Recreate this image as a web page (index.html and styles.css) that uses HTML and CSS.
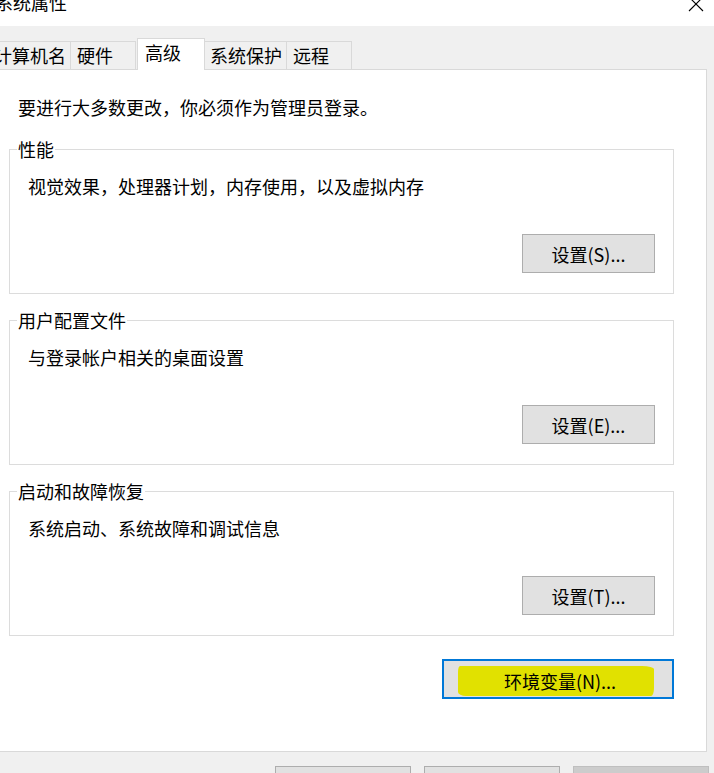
FILE: index.html
```html
<!DOCTYPE html>
<html lang="zh-CN">
<head>
  <meta charset="UTF-8" />
  <title>系统属性</title>
  <link rel="stylesheet" href="styles.css">
</head>
<body>

  <div class="dialog">
    <div class="titlebar">
      <div class="title">系统属性</div>
      <svg class="close" width="16" height="16" viewBox="0 0 16 16">
        <path d="M1 1 L15 15 M15 1 L1 15" stroke="#000" stroke-width="1.1" fill="none" />
      </svg>
    </div>

    <div class="tabs">
      <div class="tab first">计算机名</div>
      <div class="tab">硬件</div>
      <div class="tab active">高级</div>
      <div class="tab">系统保护</div>
      <div class="tab">远程</div>
    </div>

    <div class="panel">
      <p class="notice">要进行大多数更改，你必须作为管理员登录。</p>

      <fieldset class="group">
        <legend>性能</legend>
        <p class="desc">视觉效果，处理器计划，内存使用，以及虚拟内存</p>
        <button class="btn">设置(S)...</button>
      </fieldset>

      <fieldset class="group">
        <legend>用户配置文件</legend>
        <p class="desc">与登录帐户相关的桌面设置</p>
        <button class="btn">设置(E)...</button>
      </fieldset>

      <fieldset class="group">
        <legend>启动和故障恢复</legend>
        <p class="desc">系统启动、系统故障和调试信息</p>
        <button class="btn">设置(T)...</button>
      </fieldset>

      <div class="env-row">
        <button class="btn env"><span class="marker">环境变量(N)...</span></button>
      </div>
    </div>

    <div class="footer">
      <button class="btn wide">确定</button>
      <button class="btn wide">取消</button>
      <button class="btn wide disabled">应用(A)</button>
    </div>
  </div>

</body>
</html>
```

FILE: styles.css
```css
* {
  box-sizing: border-box;
}

body {
  margin: 0;
  width: 714px;
  height: 773px;
  overflow: hidden;
  background: #f0f0f0;
  font-family: "Noto Sans CJK SC", "Microsoft YaHei", sans-serif;
  font-size: 18px;
  color: #000;
}

.titlebar {
  height: 26px;
  background: #fff;
  display: flex;
  justify-content: space-between;
  align-items: flex-start;
}

.title {
  margin: -7px 0 0 -5px;
  line-height: 18px;
}

.close {
  margin: -4px 10px 0 0;
}

/* tab strip */
.tabs {
  margin-top: 12px;
  height: 31px;
  display: flex;
  align-items: flex-end;
  margin-left: -12px;
}

.tab {
  height: 28px;
  min-width: 66px;
  padding: 0 4px 0 6px;
  margin-left: -1px;
  border: 1px solid #d9d9d9;
  border-bottom: none;
  line-height: 26px;
  white-space: nowrap;
}

.tab.active {
  position: relative;
  z-index: 1;
  height: 32px;
  min-width: 68px;
  margin: 0 -1px -1px 1px;
  padding: 0 6px 4px 7px;
  background: #fff;
}

/* white tab page */
.panel {
  margin-left: -2px;
  width: 709px;
  height: 683px;
  background: #fff;
  border: 1px solid #d9d9d9;
  padding: 28px 32px 0 10px;
}

.notice {
  margin: 0 0 24px 9px;
  line-height: 18px;
}

.group {
  margin: 0 0 17px 0;
  padding: 0 18px 20px 18px;
  border: 1px solid #dcdcdc;
  display: flex;
  flex-direction: column;
}

.group legend {
  padding: 0 1px;
  margin-left: -11px;
  line-height: 18px;
}

.desc {
  margin: 19px 0 39px 0;
  line-height: 18px;
}

.btn {
  font-family: inherit;
  font-size: 18px;
  color: #000;
  background: #e1e1e1;
  border: 1px solid #adadad;
  border-radius: 0;
  height: 39px;
  width: 133px;
  padding: 0;
  line-height: 18px;
}

.group .btn {
  align-self: flex-end;
}

.env-row {
  display: flex;
  justify-content: flex-end;
  margin-top: 23px;
}

.btn.env {
  width: 232px;
  height: 40px;
  border: 2px solid #0078d7;
  display: flex;
  justify-content: center;
  align-items: center;
}

.marker {
  background: #e1e100;
  padding: 6px 38px 6px 46px;
  margin: 4px 0 0 -4px;
  border-radius: 2px 12px 3px 8px / 6px 3px 8px 4px;
}

.footer {
  display: flex;
  justify-content: flex-end;
  gap: 13px;
  margin: 14px 5px 0 0;
}

.btn.wide {
  width: 136px;
  height: 39px;
}

.btn.disabled {
  background: #cccccc;
  border-color: #bfbfbf;
  color: #838383;
}
```
